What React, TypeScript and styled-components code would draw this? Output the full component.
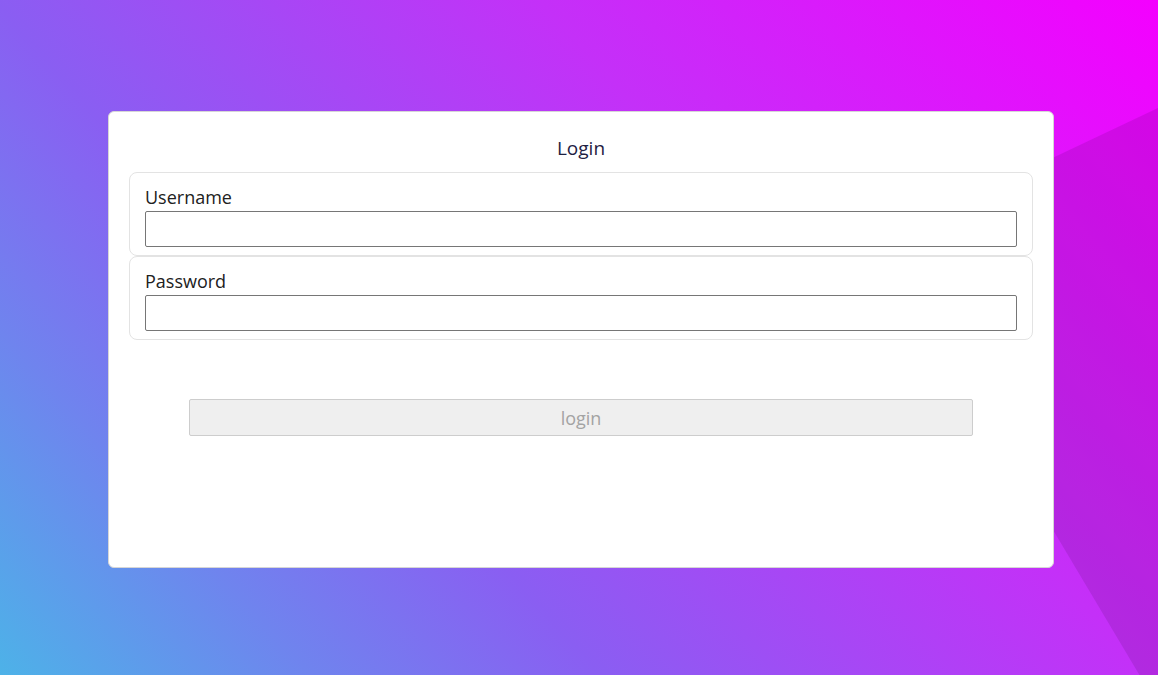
import React from "react";
import styled, { createGlobalStyle } from "styled-components";

const GlobalStyle = createGlobalStyle`
  html, body {
    margin: 0;
    padding: 0;
    height: 100%;
  }
  body {
    font-family: "Open Sans", "Noto Sans", "Liberation Sans", sans-serif;
    color: #212529;
  }
  * {
    box-sizing: border-box;
  }
`;

const Page = styled.div`
  position: relative;
  min-height: 100vh;
  padding: 4px 0 0 4px;
  display: flex;
  align-items: center;
  justify-content: center;
  overflow: hidden;
  background: linear-gradient(
    48deg,
    #4db2e8 0%,
    #6f84ee 17.6%,
    #8a5ef2 34%,
    #c430f8 65%,
    #f400ff 100%
  );

  /* darker facet on the right side */
  &::before {
    content: "";
    position: absolute;
    inset: 0;
    background: rgba(40, 0, 60, 0.12);
    clip-path: polygon(100% 16%, 76% 35.5%, 98.4% 100%, 100% 100%);
  }
`;

const Card = styled.form`
  position: relative;
  z-index: 1;
  width: 946px;
  background: #fff;
  border: 1px solid #d6d6d6;
  border-radius: 6px;
  padding: 22px 20px 131px;
  display: flex;
  flex-direction: column;
`;

const Title = styled.h1`
  margin: 0 0 10px;
  font-size: 19px;
  line-height: 28px;
  font-weight: 400;
  text-align: center;
  color: #1e2142;
`;

const Field = styled.div`
  display: flex;
  flex-direction: column;
  border: 1px solid #e3e3e3;
  border-radius: 8px;
  padding: 12px 15px 8px;
`;

const Label = styled.label`
  font-size: 18px;
  line-height: 24px;
  margin-bottom: 2px;
  color: #212121;
`;

const Input = styled.input`
  height: 36px;
  width: 100%;
  border: 1px solid #767676;
  border-radius: 2px;
  padding: 0 8px;
  font: inherit;
  font-size: 16px;
  outline: none;
`;

const Button = styled.button`
  margin: 59px 60px 0;
  height: 37px;
  background: #efefef;
  border: 1px solid #cdcdcd;
  border-radius: 2px;
  font-family: inherit;
  font-size: 18px;
  color: #a3a3a3;
`;

export default function App() {
  return (
    <>
      <GlobalStyle />
      <Page>
        <Card onSubmit={(e) => e.preventDefault()}>
          <Title>Login</Title>
          <Field>
            <Label htmlFor="username">Username</Label>
            <Input id="username" type="text" />
          </Field>
          <Field>
            <Label htmlFor="password">Password</Label>
            <Input id="password" type="password" />
          </Field>
          <Button type="submit" disabled>
            login
          </Button>
        </Card>
      </Page>
    </>
  );
}
